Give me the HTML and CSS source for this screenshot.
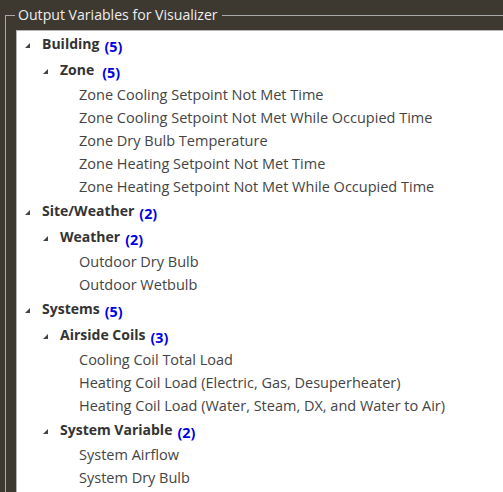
FILE: index.html
```html
<!DOCTYPE html>
<html>
<head>
<meta charset="utf-8">
<link rel="stylesheet" href="styles.css">
</head>
<body>
<fieldset class="group">
  <legend class="group-title">Output Variables for Visualizer</legend>
  <div class="panel">
    <ul class="tree">
      <li class="node">
        <div class="row head"><span class="arrow"></span><span class="label">Building</span><span class="count">(5)</span></div>
        <ul class="tree">
          <li class="node">
            <div class="row head"><span class="arrow"></span><span class="label">Zone</span><span class="count wide">(5)</span></div>
            <ul class="tree leaves">
              <li class="row leaf">Zone Cooling Setpoint Not Met Time</li>
              <li class="row leaf">Zone Cooling Setpoint Not Met While Occupied Time</li>
              <li class="row leaf">Zone Dry Bulb Temperature</li>
              <li class="row leaf">Zone Heating Setpoint Not Met Time</li>
              <li class="row leaf">Zone Heating Setpoint Not Met While Occupied Time</li>
            </ul>
          </li>
        </ul>
      </li>
      <li class="node">
        <div class="row head"><span class="arrow"></span><span class="label">Site/Weather</span><span class="count">(2)</span></div>
        <ul class="tree">
          <li class="node">
            <div class="row head"><span class="arrow"></span><span class="label">Weather</span><span class="count">(2)</span></div>
            <ul class="tree leaves">
              <li class="row leaf">Outdoor Dry Bulb</li>
              <li class="row leaf">Outdoor Wetbulb</li>
            </ul>
          </li>
        </ul>
      </li>
      <li class="node">
        <div class="row head"><span class="arrow"></span><span class="label">Systems</span><span class="count">(5)</span></div>
        <ul class="tree">
          <li class="node">
            <div class="row head"><span class="arrow"></span><span class="label">Airside Coils</span><span class="count">(3)</span></div>
            <ul class="tree leaves">
              <li class="row leaf">Cooling Coil Total Load</li>
              <li class="row leaf">Heating Coil Load (Electric, Gas, Desuperheater)</li>
              <li class="row leaf">Heating Coil Load (Water, Steam, DX, and Water to Air)</li>
            </ul>
          </li>
          <li class="node">
            <div class="row head"><span class="arrow"></span><span class="label">System Variable</span><span class="count">(2)</span></div>
            <ul class="tree leaves">
              <li class="row leaf">System Airflow</li>
              <li class="row leaf">System Dry Bulb</li>
            </ul>
          </li>
        </ul>
      </li>
    </ul>
  </div>
</fieldset>
</body>
</html>
```
FILE: styles.css
```css
html, body {
  margin: 0;
  padding: 0;
  height: 100%;
  overflow: hidden;
  background: #3d3931;
  font-family: "Open Sans", "Noto Sans", sans-serif;
}

.group {
  display: flex;
  flex-direction: column;
  margin: 5px 0 0 5px;
  padding: 5px 0 0 10px;
  border: none;
  border-top: 1px solid #a9a9a9;
  border-left: 1px solid #a9a9a9;
  height: calc(100% - 5px);
  box-sizing: border-box;
  min-width: 0;
}

.group-title {
  margin-left: -1px;
  padding: 0 4px 0 3px;
  line-height: 20px;
  font-size: 14.1px;
  color: #eeeeee;
}

.panel {
  flex: 1;
  background: #ffffff;
  border-top: 1px solid #b4b4b4;
  border-left: 1px solid #b4b4b4;
  overflow: hidden;
}

.tree {
  list-style: none;
  margin: 0;
  padding: 0;
}

.tree .tree {
  padding-left: 18px;
}

.row {
  display: flex;
  align-items: center;
  white-space: nowrap;
}

.head {
  box-sizing: border-box;
  height: 26px;
  padding-left: 8px;
  padding-bottom: 2px;
}

.leaf {
  height: 23px;
  padding-left: 26px;
  font-size: 14.5px;
  color: #444444;
}

.arrow {
  width: 0;
  height: 0;
  border-left: 5px solid transparent;
  border-bottom: 5px solid #444444;
  margin-right: 12px;
  margin-top: 4px;
}

.label {
  font-weight: bold;
  font-size: 14px;
  color: #333333;
}

.count {
  font-weight: bold;
  font-size: 14.3px;
  color: #0000e6;
  margin-left: 5px;
  position: relative;
  top: 3px;
}

.count.wide {
  margin-left: 8px;
}
```
